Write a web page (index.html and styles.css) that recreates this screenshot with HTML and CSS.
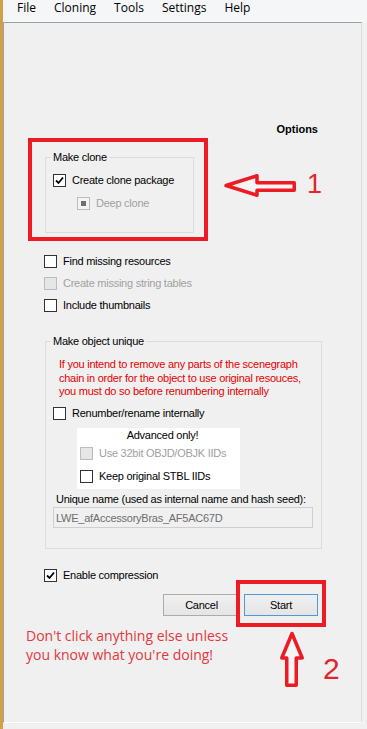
FILE: index.html
```html
<!DOCTYPE html>
<html lang="en">
<head>
<meta charset="utf-8">
<title>Clone</title>
<link rel="stylesheet" href="styles.css">
</head>
<body>
<div class="app">
  <nav class="menubar">
    <span>File</span><span>Cloning</span><span>Tools</span><span>Settings</span><span>Help</span>
  </nav>
  <main class="panel">
    <div class="heading">Options</div>

    <div class="callout-row">
      <div class="redbox">
        <fieldset class="group group-clone">
          <legend>Make clone</legend>
          <label class="check"><span class="box"><svg viewBox="0 0 11 11"><path d="M2 5.5 4.5 8 9 2.5" fill="none" stroke="#000" stroke-width="1.8"/></svg></span>Create clone package</label>
          <label class="check disabled deep"><span class="box mixed"></span>Deep clone</label>
        </fieldset>
      </div>
      <svg class="arrow-left" viewBox="0 0 74 28"><polygon points="2,13.5 33,3.75 33,10.75 70.25,10.75 70.25,18.25 33,18.25 33,23.25" fill="#f5f5f5" stroke="#ed1c24" stroke-width="3.5" stroke-linejoin="round"/></svg>
      <span class="num num-1">1</span>
    </div>

    <div class="options">
      <label class="check"><span class="box"></span>Find missing resources</label>
      <label class="check disabled"><span class="box"></span>Create missing string tables</label>
      <label class="check"><span class="box"></span>Include thumbnails</label>
    </div>

    <fieldset class="group group-unique">
      <legend>Make object unique</legend>
      <p class="warn">If you intend to remove any parts of the scenegraph<br>chain in order for the object to use original resouces,<br>you must do so before renumbering internally</p>
      <label class="check renumber"><span class="box"></span>Renumber/rename internally</label>
      <div class="advanced">
        <div class="advanced-title">Advanced only!</div>
        <label class="check disabled adv-row1"><span class="box"></span>Use 32bit OBJD/OBJK IIDs</label>
        <label class="check adv-row2"><span class="box"></span>Keep original STBL IIDs</label>
      </div>
      <div class="name-label">Unique name (used as internal name and hash seed):</div>
      <div class="textbox">LWE_afAccessoryBras_AF5AC67D</div>
    </fieldset>

    <label class="check compress"><span class="box"><svg viewBox="0 0 11 11"><path d="M2 5.5 4.5 8 9 2.5" fill="none" stroke="#000" stroke-width="1.8"/></svg></span>Enable compression</label>

    <div class="buttons">
      <button class="btn btn-cancel" type="button">Cancel</button>
      <span class="start-wrap"><button class="btn btn-start" type="button">Start</button></span>
    </div>

    <div class="note-row">
      <p class="note">Don't click anything else unless<br>you know what you're doing!</p>
      <svg class="arrow-up" viewBox="0 0 28 60"><polygon points="14,3.5 24.25,28 18.25,28 18.25,55.25 8.75,55.25 8.75,28 3.75,28" fill="#f5f5f5" stroke="#ed1c24" stroke-width="3.5" stroke-linejoin="round"/></svg>
      <span class="num num-2">2</span>
    </div>
  </main>
</div>
</body>
</html>
```

FILE: styles.css
```css
html, body {
  margin: 0;
  padding: 0;
}
body {
  width: 367px;
  height: 729px;
  overflow: hidden;
  background: #f0f0f0;
  font-family: "Liberation Sans", Arial, sans-serif;
  font-size: 11px;
  letter-spacing: -0.25px;
  color: #000;
}
.app {
  box-sizing: border-box;
  height: 729px;
  border-left: 3px solid #cfa24a;
}
.menubar {
  display: flex;
  height: 22px;
  padding-left: 5px;
  background: #f5f6f7;
  font-family: "Open Sans", sans-serif;
  font-size: 12px;
  line-height: 15px;
  letter-spacing: 0;
}
.menubar span {
  padding: 0 9px;
}
.panel {
  box-sizing: border-box;
  width: 359px;
  height: 701px;
  border: 1px solid;
  border-color: #a0a0a0 #dcdcdc #ffffff #a0a0a0;
  background: #f0f0f0;
  display: flex;
  flex-direction: column;
  align-items: flex-start;
}
.heading {
  align-self: stretch;
  text-align: right;
  margin: 99px 43px 0 0;
  font-weight: bold;
  line-height: 14px;
  letter-spacing: 0;
}
.callout-row {
  display: flex;
  align-items: flex-start;
  margin: 2px 0 0 24px;
}
.redbox {
  box-sizing: border-box;
  width: 180px;
  height: 103px;
  border: 4px solid #ed1c24;
  flex: none;
}
.group {
  box-sizing: border-box;
  margin: 0;
  min-width: 0;
  border: 1px solid #dcdcdc;
  padding: 0 7px;
}
.group legend {
  padding: 0 2px;
  margin-left: -2px;
  line-height: 14px;
}
.group-clone {
  width: 149px;
  margin: 8px 0 0 13px;
  padding-top: 8px;
  padding-bottom: 21px;
}
.check {
  display: flex;
  align-items: center;
  gap: 6px;
  height: 16px;
  line-height: 14px;
  white-space: nowrap;
}
.box {
  box-sizing: border-box;
  width: 13px;
  height: 13px;
  flex: none;
  border: 1px solid #333333;
  background: #ffffff;
  display: flex;
  align-items: center;
  justify-content: center;
}
.box svg {
  width: 11px;
  height: 11px;
}
.disabled {
  color: #a0a0a0;
}
.disabled .box {
  border-color: #bcbcbc;
  background: #e6e6e6;
}
.disabled .box.mixed {
  background: #f4f4f4;
}
.box.mixed::before {
  content: "";
  width: 5px;
  height: 5px;
  background: #707070;
}
.deep {
  margin: 7px 0 0 24px;
}
.arrow-left {
  flex: none;
  width: 74px;
  height: 28px;
  margin: 34px 0 0 16px;
}
.num {
  font-family: "Liberation Sans", Arial, sans-serif;
  letter-spacing: 0;
  color: #e3262d;
}
.num-1 {
  font-size: 27px;
  line-height: 28px;
  margin: 32px 0 0 9px;
}
.options {
  display: flex;
  flex-direction: column;
  gap: 6px;
  margin: 12px 0 0 40px;
}
.group-unique {
  width: 277px;
  margin: 21px 0 0 41px;
  padding-top: 10px;
  padding-bottom: 20px;
}
.warn {
  margin: 0 0 0 6px;
  color: #e60000;
  line-height: 13.5px;
  white-space: nowrap;
}
.renumber {
  margin-top: 6.5px;
}
.advanced {
  box-sizing: border-box;
  width: 163px;
  margin: 7px 0 0 24px;
  padding: 0 0 5px 3px;
  background: #ffffff;
}
.advanced-title {
  text-align: center;
  padding-left: 5px;
  line-height: 14px;
}
.adv-row1 {
  margin-top: 3px;
}
.adv-row2 {
  margin-top: 7px;
}
.name-label {
  margin: 3px 0 0 3px;
  line-height: 14px;
  white-space: nowrap;
}
.textbox {
  box-sizing: border-box;
  width: 260px;
  height: 21px;
  margin-top: 1px;
  padding-left: 2px;
  border: 1px solid #cfcfcf;
  background: #f0f0f0;
  color: #6d6d6d;
  display: flex;
  align-items: center;
}
.compress {
  margin: 18px 0 0 40px;
}
.buttons {
  align-self: stretch;
  display: flex;
  justify-content: flex-end;
  gap: 4px;
  margin: 11px 43px 0 0;
}
.btn {
  box-sizing: border-box;
  height: 22px;
  padding: 0;
  border: 1px solid #acacac;
  background: linear-gradient(#f0f0f0, #e5e5e5);
  font-family: "Liberation Sans", Arial, sans-serif;
  font-size: 11px;
  letter-spacing: -0.25px;
  color: #000;
}
.btn-cancel {
  width: 77px;
}
.start-wrap {
  position: relative;
  display: flex;
}
.btn-start {
  width: 74px;
  border-color: #4d9ad9;
}
.start-wrap::after {
  content: "";
  position: absolute;
  top: -14px;
  bottom: -11px;
  left: -8px;
  right: -8px;
  border: 4px solid #ed1c24;
}
.note-row {
  display: flex;
  align-items: flex-start;
  margin-top: 10px;
}
.note {
  margin: 0 0 0 22px;
  width: 252px;
  font-family: "Open Sans", sans-serif;
  font-size: 14px;
  line-height: 19px;
  letter-spacing: 0;
  color: #e2383d;
  white-space: nowrap;
}
.arrow-up {
  flex: none;
  width: 28px;
  height: 60px;
  margin-top: 4px;
}
.num-2 {
  font-size: 30px;
  line-height: 30px;
  margin: 28px 0 0 17px;
}
```
